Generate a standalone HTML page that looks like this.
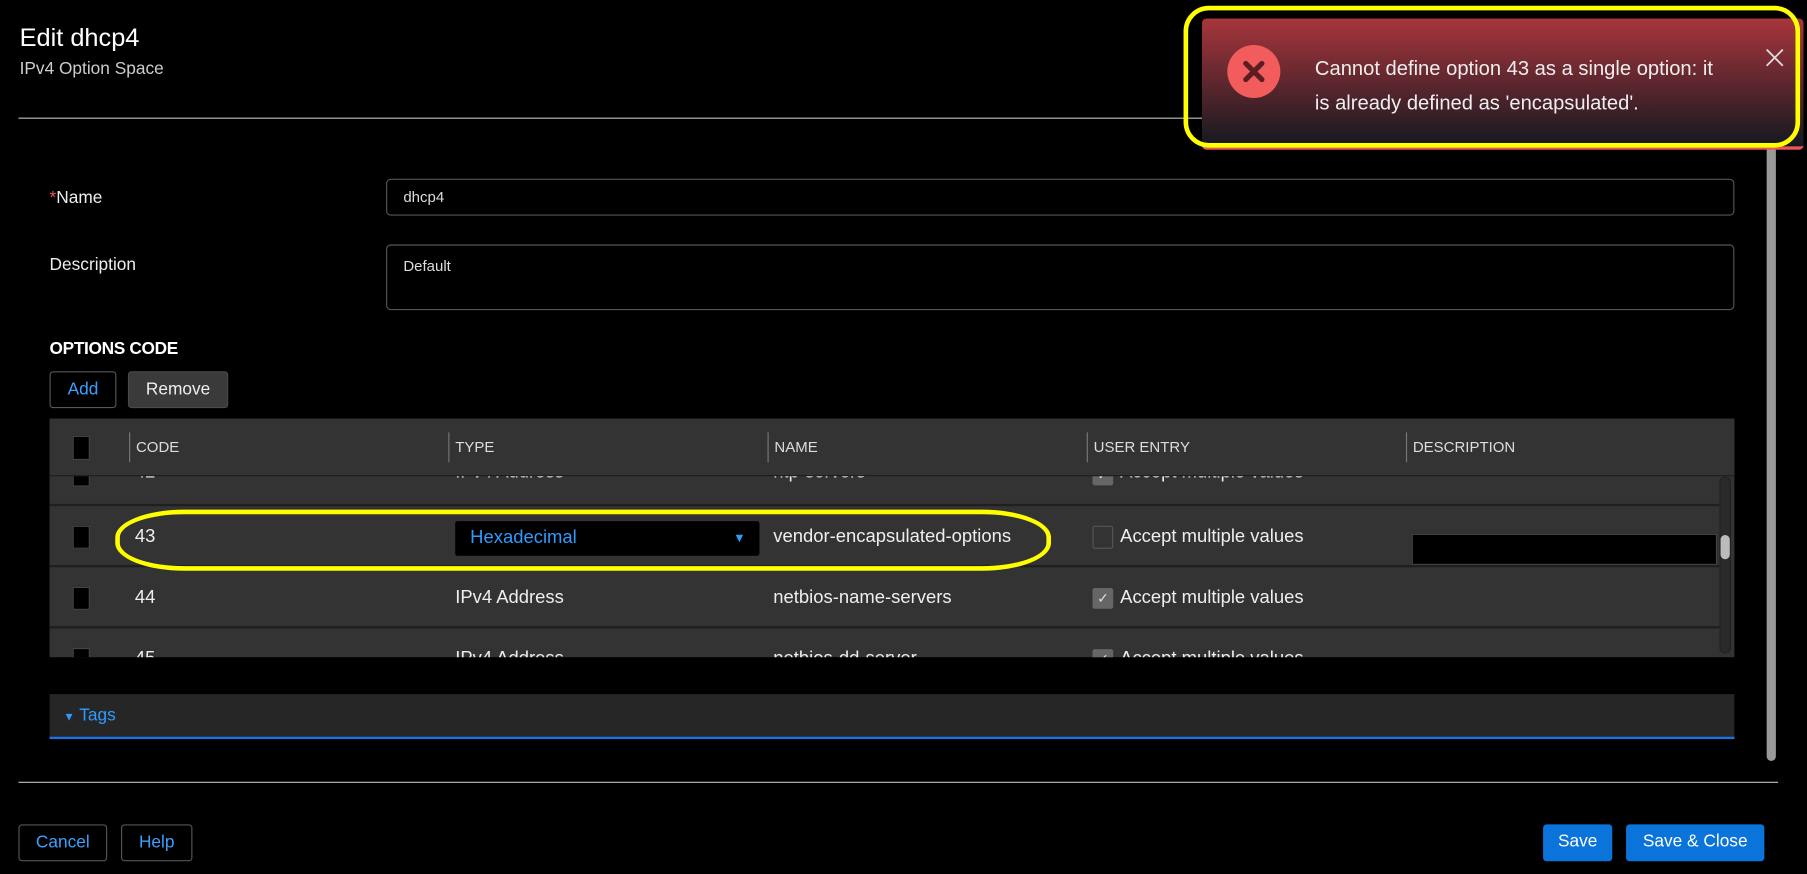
<!DOCTYPE html>
<html><head><style>
html,body{margin:0;padding:0;background:#000;width:1807px;height:874px;overflow:hidden}
#w{position:absolute;left:0;top:0;width:1568px;height:758px;transform:scale(1.15242,1.1530);transform-origin:0 0;font-family:"Liberation Sans",sans-serif;color:#eee}
.a{position:absolute}
.inp{position:absolute;border:1px solid #555;border-radius:4px;background:#000;box-sizing:border-box;font-size:13px;padding-left:14px;color:#ddd}
.btn{position:absolute;box-sizing:border-box;border-radius:3px;font-size:15px;text-align:center;line-height:30px}
.th{position:absolute;top:12px;font-size:13px;color:#ddd;border-left:1px solid #777;padding-left:5px;height:26px;line-height:16px;padding-top:5px;box-sizing:border-box}
.row{position:absolute;left:0;width:1449px;height:53px;border-top:2px solid #1f1f1f;box-sizing:border-box}
.cb{position:absolute;left:20px;width:15px;height:17px;background:#000;border:1px solid #444;box-sizing:border-box}
.t{position:absolute;font-size:16px;color:#eee}
.ck{position:absolute;left:905px;width:18px;height:18px;background:#666;border-radius:2px;color:#ddd;font-size:12px;text-align:center;line-height:18px}
</style></head><body><div id="w">
<div class="a" style="left:17px;top:20px;font-size:22px;color:#fff">Edit dhcp4</div>
<div class="a" style="left:17px;top:51px;font-size:15px;color:#ccc">IPv4 Option Space</div>
<div class="a" style="left:16px;top:102px;width:1530px;height:1px;background:#bbb"></div>
<div class="a" style="left:1533px;top:125px;width:8px;height:535px;background:#999;border-radius:0 0 4px 4px"></div>

<div class="a" style="left:43px;top:163px;font-size:15px"><span style="color:#e55">*</span>Name</div>
<div class="inp" style="left:335px;top:155px;width:1170px;height:32px;line-height:30px">dhcp4</div>
<div class="a" style="left:43px;top:221px;font-size:15px">Description</div>
<div class="inp" style="left:335px;top:212px;width:1170px;height:57px;padding-top:10px">Default</div>
<div class="a" style="left:43px;top:294px;font-size:15px;font-weight:bold;color:#fff;letter-spacing:-0.3px">OPTIONS CODE</div>
<div class="btn" style="left:43px;top:322px;width:58px;height:32px;border:1px solid #555;color:#3aa0ff">Add</div>
<div class="btn" style="left:111px;top:322px;width:87px;height:32px;border:1px solid #4a4a4a;background:#3a3a3a;color:#eee">Remove</div>

<div class="a" style="left:43px;top:363px;width:1462px;height:207px;background:#333;overflow:hidden">
 <div class="row" style="top:49px;height:27px;border-top:none"><div class="cb" style="top:-10px;height:20px"></div><div class="t" style="left:74px;top:-11px">42</div><div class="t" style="left:352px;top:-11px">IPv4 Address</div><div class="t" style="left:628px;top:-11px">ntp-servers</div><div class="ck" style="top:-9px">✓</div><div class="t" style="left:929px;top:-11px">Accept multiple values</div></div>
 <div class="row" style="top:74px">
  <div class="cb" style="top:17px;height:20px"></div><div class="t" style="left:74px;top:18px">43</div>
  <div class="a" style="left:352px;top:13px;width:264px;height:30px;background:#000;border-radius:2px;color:#2f9bff;font-size:16px;line-height:30px;padding-left:13px;box-sizing:border-box">Hexadecimal<span style="position:absolute;right:12px;top:0;font-size:11px">▼</span></div>
  <div class="t" style="left:628px;top:18px">vendor-encapsulated-options</div>
  <div class="a" style="left:905px;top:17px;width:18px;height:20px;border:1px solid #555;box-sizing:border-box;border-radius:2px"></div>
  <div class="t" style="left:929px;top:18px">Accept multiple values</div>
  <div class="a" style="left:1182px;top:24px;width:265px;height:27px;background:#000;border:1px solid #444;box-sizing:border-box"></div>
 </div>
 <div class="row" style="top:127px"><div class="cb" style="top:17px;height:20px"></div><div class="t" style="left:74px;top:18px">44</div><div class="t" style="left:352px;top:18px">IPv4 Address</div><div class="t" style="left:628px;top:18px">netbios-name-servers</div><div class="ck" style="top:18px">✓</div><div class="t" style="left:929px;top:18px">Accept multiple values</div></div>
 <div class="row" style="top:180px"><div class="cb" style="top:17px;height:20px"></div><div class="t" style="left:74px;top:18px">45</div><div class="t" style="left:352px;top:18px">IPv4 Address</div><div class="t" style="left:628px;top:18px">netbios-dd-server</div><div class="ck" style="top:18px">✓</div><div class="t" style="left:929px;top:18px">Accept multiple values</div></div>
 <div class="a" style="left:1449px;top:50px;width:10px;height:154px;border:1px solid #222;border-radius:5px;box-sizing:border-box;background:#2a2a2a"></div>
 <div class="a" style="left:1450px;top:101px;width:8px;height:21px;background:#bbb;border-radius:4px"></div>
 <div class="a" style="left:0;top:0;width:1462px;height:49px;background:#333;border-bottom:1px solid #1f1f1f">
  <div class="cb" style="top:15px;height:21px"></div>
  <div class="th" style="left:69px">CODE</div>
  <div class="th" style="left:346px">TYPE</div>
  <div class="th" style="left:623px">NAME</div>
  <div class="th" style="left:900px">USER ENTRY</div>
  <div class="th" style="left:1177px">DESCRIPTION</div>
 </div>
</div>

<div class="a" style="left:100px;top:442px;width:804px;height:45px;border:4px solid #ff0;border-radius:60px/24px"></div>

<div class="a" style="left:43px;top:602px;width:1462px;height:37px;background:#262626;border-bottom:2px solid #1a73e8"></div>
<div class="a" style="left:55px;top:612px;font-size:15px;color:#2f9bff"><span style="font-size:10px">▼</span> Tags</div>
<div class="a" style="left:16px;top:678px;width:1527px;height:1px;background:#bbb"></div>

<div class="btn" style="left:16px;top:715px;width:77px;height:32px;border:1px solid #555;color:#3aa0ff">Cancel</div>
<div class="btn" style="left:105px;top:715px;width:62px;height:32px;border:1px solid #555;color:#3aa0ff">Help</div>
<div class="btn" style="left:1339px;top:715px;width:60px;height:32px;background:#0a74da;color:#fff">Save</div>
<div class="btn" style="left:1411px;top:715px;width:120px;height:32px;background:#0a74da;color:#fff">Save &amp; Close</div>

<div class="a" style="left:1043px;top:16px;width:522px;height:111px;background:linear-gradient(#a8353c,#141820);border-bottom:3px solid #e55;border-radius:4px"></div>
<div class="a" style="left:1065px;top:39px;width:46px;height:46px;border-radius:50%;background:#f25c5c"></div>
<svg class="a" style="left:1065px;top:39px" width="46" height="46"><path d="M16 16L30 30M30 16L16 30" stroke="#5a1d22" stroke-width="4.5" stroke-linecap="round"/></svg>
<div class="a" style="left:1141px;top:44px;font-size:17.5px;line-height:30px;color:#eee;width:400px">Cannot define option 43 as a single option: it<br>is already defined as 'encapsulated'.</div>
<svg class="a" style="left:1532px;top:42px" width="16" height="16"><path d="M1 1L15 15M15 1L1 15" stroke="#ddd" stroke-width="1.6"/></svg>
<div class="a" style="left:1027px;top:5px;width:527px;height:115px;border:4px solid #ff0;border-radius:22px"></div>
</div></body></html>
